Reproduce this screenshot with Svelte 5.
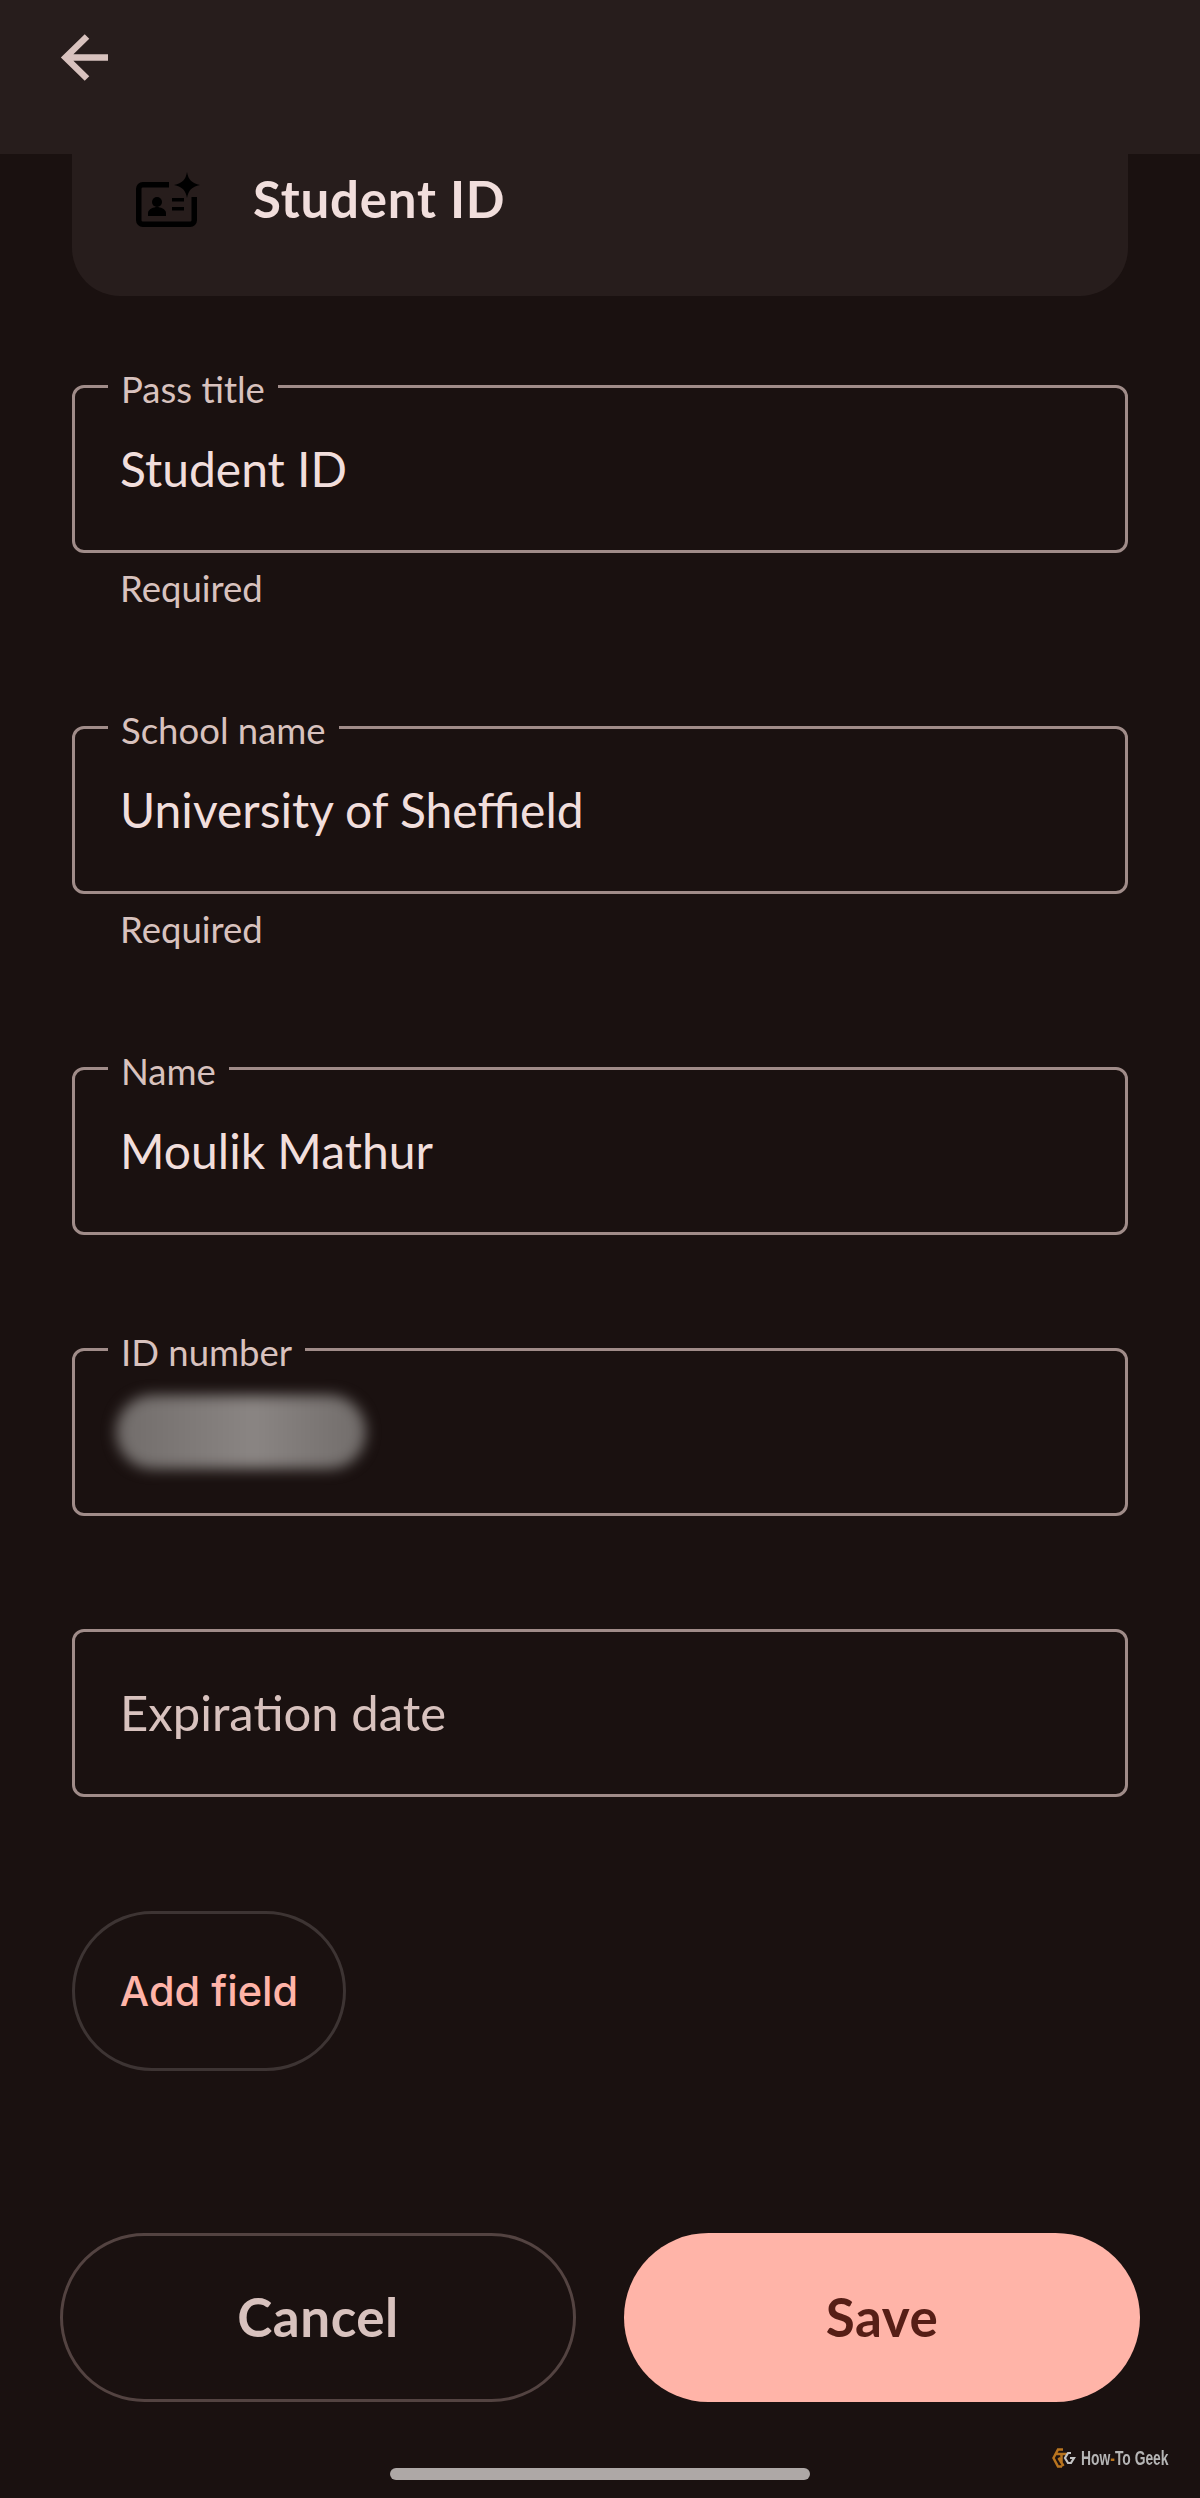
<script lang="ts">
  const fields = [
    { label: 'Pass title', value: 'Student ID', helper: 'Required' },
    { label: 'School name', value: 'University of Sheffield', helper: 'Required' },
    { label: 'Name', value: 'Moulik Mathur' },
    { label: 'ID number', hidden: true }
  ]
</script>

<div class="screen">
  <header class="topbar">
    <svg class="back" viewBox="0 0 52 48" width="52" height="48" aria-hidden="true">
      <path d="M52 23.500H9.500M31 2.500L9.500 23.500 31 44.500" fill="none" stroke="#d8c2be" stroke-width="6.500" />
    </svg>
  </header>

  <main class="content">
    <section class="preview">
      <svg class="pass-icon" viewBox="0 0 64 56" width="64" height="56" aria-hidden="true">
        <path d="M33 12.750H6.750a4 4 0 0 0-4 4V48.250a4 4 0 0 0 4 4H54.250a4 4 0 0 0 4-4V25" fill="none" stroke="#000" stroke-width="5.500" />
        <circle cx="21" cy="30" r="5" fill="#000" />
        <path d="M12 44v-3c0-4 6-6 9-6s9 2 9 6v3z" fill="#000" />
        <path d="M36 26h12v3.500H36zM36 35h12v3.500H36z" fill="#000" />
        <path d="M51 0c1.500 8 4.500 11 13 13c-8.500 2-11.500 5-13 13c-1.500-8-4.500-11-13-13c8.500-2 11.500-5 13-13z" fill="#000" />
      </svg>
      <h1>Student ID</h1>
    </section>

    {#each fields as field}
      <div class="field-block" class:has-helper={field.helper}>
        <fieldset class="field">
          <legend>{field.label}</legend>
          {#if field.hidden}
            <div class="redacted"></div>
          {:else}
            <div class="value">{field.value}</div>
          {/if}
        </fieldset>
        {#if field.helper}
          <p class="helper">{field.helper}</p>
        {/if}
      </div>
    {/each}

    <div class="field-block">
      <div class="empty-field">Expiration date</div>
    </div>

    <button class="add-field">Add field</button>
  </main>

  <footer class="actions">
    <button class="cancel">Cancel</button>
    <button class="save">Save</button>
  </footer>

  <div class="watermark">
    <svg viewBox="0 0 24 20" width="24" height="20" aria-hidden="true">
      <path d="M11 1.500H6L1.500 10 6 18.500h4M4 6h11M9.500 6v7l-3-3 5 8" fill="none" stroke="#b8741f" stroke-width="2.500" />
      <path d="M19 5h-3l-3 5 3 5h3l3-5h-4" fill="none" stroke="#c4c4c4" stroke-width="2.200" />
    </svg>
    <span>How<b>-</b>To Geek</span>
  </div>

  <div class="home-bar"></div>
</div>

<style>
  :global(body) {
    background: #1a1110;
  }

  .screen {
    position: relative;
    width: 1200px;
    height: 2498px;
    background: #1a1110;
    font-family: "Lato", "Roboto", sans-serif;
    overflow: hidden;
  }

  .topbar {
    height: 154px;
    background: #271d1c;
    padding: 34px 0 0 56px;
    box-sizing: border-box;
  }

  .back {
    display: block;
  }

  .content {
    padding: 0 72px;
  }

  .preview {
    height: 142px;
    box-sizing: border-box;
    background: #271d1c;
    border-radius: 0 0 48px 48px;
    display: flex;
    align-items: flex-start;
    padding: 17px 0 0 64px;
    gap: 53px;
    margin-bottom: 90px;
  }

  .pass-icon {
    flex: none;
    margin-top: 1px;
  }

  h1 {
    margin: 0;
    font-size: 51px;
    line-height: 56px;
    letter-spacing: 0.8px;
    font-weight: 700;
    color: #f1dedc;
  }

  .field-block {
    display: flex;
    flex-direction: column;
    height: 281px;
  }

  .field-block.has-helper {
    height: 341px;
  }

  .field {
    height: 188px;
    flex: none;
    margin: -21px 0 0;
    padding: 0 0 0 45px;
    box-sizing: border-box;
    border: 3px solid #a08c89;
    border-radius: 12px;
  }

  legend {
    margin-left: -12px;
    padding: 6px 13px 0;
    font-size: 36.5px;
    line-height: 36px;
    color: #d8c2be;
  }

  .value {
    margin-top: 32px;
    font-size: 48px;
    line-height: 60px;
    color: #f1dedc;
  }

  .redacted {
    width: 250px;
    height: 74px;
    margin: 25px 0 0 -4px;
    border-radius: 37px;
    background: linear-gradient(90deg, #716c6a, #8a8583 55%, #716c6a);
    filter: blur(7px);
  }

  .helper {
    margin: 13px 0 0 48px;
    font-size: 36.5px;
    line-height: 44px;
    color: #d8c2be;
  }

  .empty-field {
    height: 168px;
    margin-top: -1px;
    display: flex;
    align-items: center;
    padding: 0 0 3px 45px;
    box-sizing: border-box;
    border: 3px solid #a08c89;
    border-radius: 12px;
    font-size: 49px;
    color: #d8c2be;
  }

  .add-field {
    display: block;
    width: 274px;
    height: 160px;
    padding: 0;
    background: transparent;
    border: 3px solid #3d3433;
    border-radius: 80px;
    font: 500 41.5px "Inter", "Roboto", sans-serif;
    color: #ffb4a8;
  }

  .actions {
    position: absolute;
    left: 60px;
    right: 60px;
    top: 2233px;
    display: grid;
    grid-template-columns: 1fr 1fr;
    gap: 48px;
  }

  .actions button {
    height: 169px;
    padding: 0 0 3px;
    border-radius: 85px;
    font: 700 53px "Lato", "Roboto", sans-serif;
    letter-spacing: 0.5px;
  }

  .cancel {
    background: transparent;
    border: 3px solid #534341;
    color: #d8c2be;
  }

  .save {
    background: #ffb4a8;
    border: none;
    color: #561e16;
  }

  .watermark {
    position: absolute;
    left: 1052px;
    top: 2446px;
    display: flex;
    align-items: center;
    gap: 5px;
    white-space: nowrap;
    font: 700 21px "Liberation Sans", sans-serif;
    color: #b5b5b5;
  }

  .watermark span {
    transform: scaleX(0.66);
    transform-origin: left center;
  }

  .watermark b {
    color: #b8741f;
  }

  .home-bar {
    position: absolute;
    left: 390px;
    top: 2468px;
    width: 420px;
    height: 12px;
    border-radius: 6px;
    background: #aea8a6;
  }
</style>
